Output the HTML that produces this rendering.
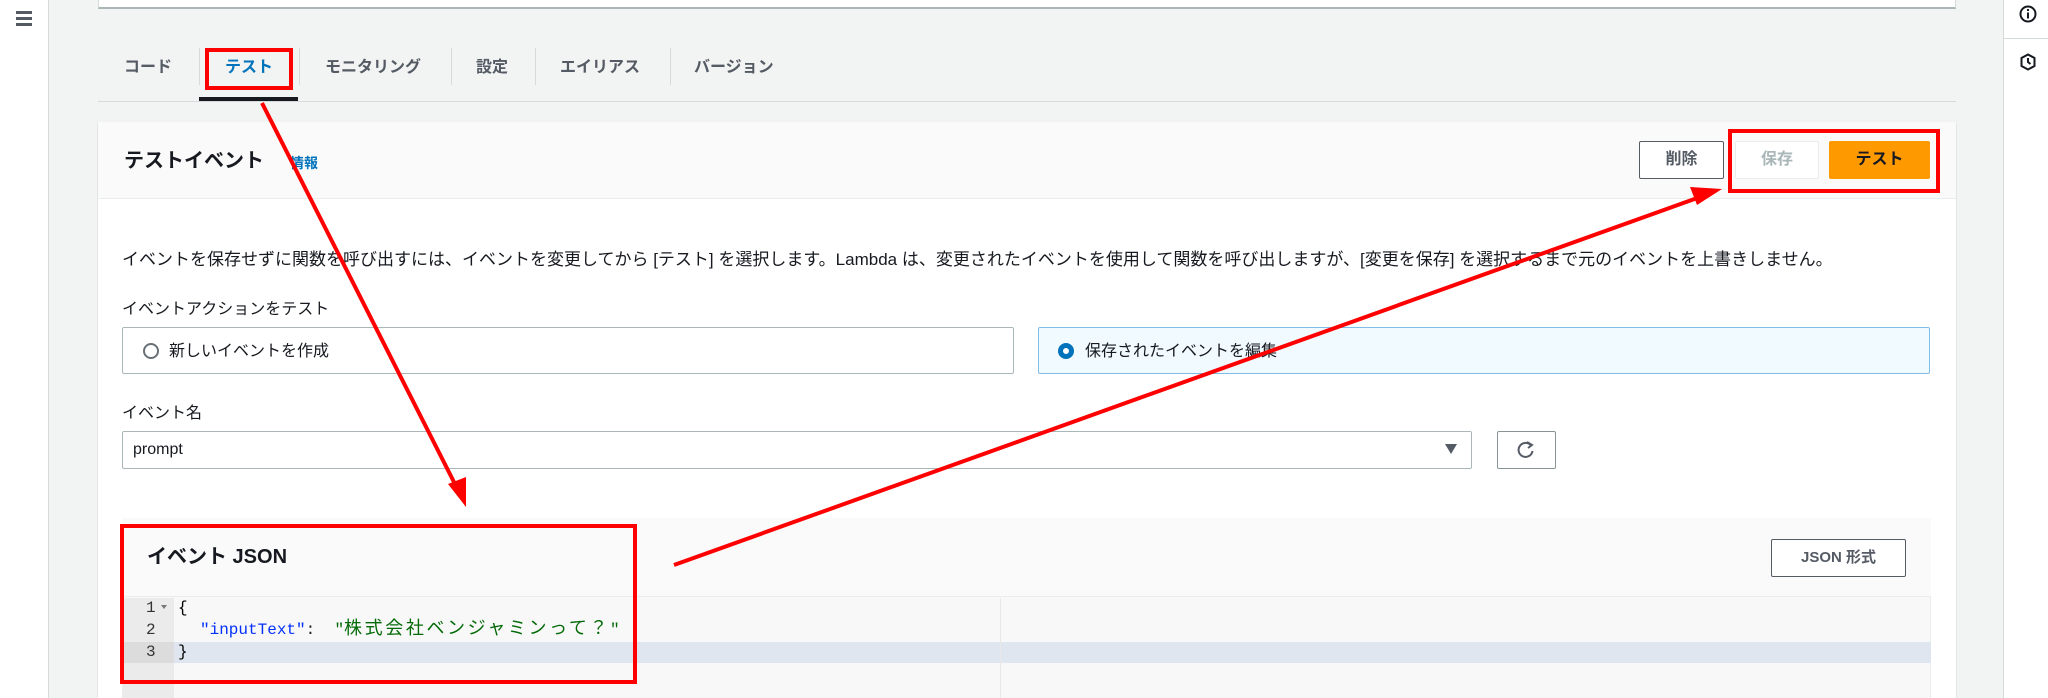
<!DOCTYPE html>
<html style="width:2048px;height:698px;overflow:hidden"><head><meta charset="utf-8"><style>
*{box-sizing:border-box;margin:0;padding:0}
body{width:2048px;height:698px;overflow:hidden;background:#f2f3f3;font-family:"Liberation Sans","Noto Sans CJK JP",sans-serif;color:#16191f;position:relative}
.a{position:absolute}
.t{position:absolute;white-space:nowrap;line-height:1.2}
</style></head><body>
<div class="a" style="left:0;top:0;width:49px;height:698px;background:#fff;border-right:1px solid #d5dbdb"></div>
<div class="a" style="left:16px;top:11px;width:16px;height:3px;background:#545b64"></div>
<div class="a" style="left:16px;top:17px;width:16px;height:3px;background:#545b64"></div>
<div class="a" style="left:16px;top:23px;width:16px;height:3px;background:#545b64"></div>
<div class="a" style="left:2003px;top:0;width:45px;height:698px;background:#fff;border-left:1px solid #d5dbdb"></div>
<div class="a" style="left:2003px;top:38px;width:45px;height:1px;background:#d5dbdb"></div>
<svg class="a" style="left:2018px;top:4px" width="20" height="20" viewBox="0 0 20 20"><circle cx="10" cy="10" r="7.5" fill="none" stroke="#16191f" stroke-width="2"/><rect x="9" y="8.5" width="2" height="6" fill="#16191f"/><rect x="9" y="5" width="2" height="2" fill="#16191f"/></svg>
<svg class="a" style="left:2018px;top:52px" width="20" height="20" viewBox="0 0 20 20"><path d="M10 2.5 L16.5 6 V14 L10 17.5 L3.5 14 V6Z" fill="none" stroke="#16191f" stroke-width="2"/><path d="M10 6 V10 L12.5 12" fill="none" stroke="#16191f" stroke-width="2"/></svg>

<div class="a" style="left:98px;top:-2px;width:1858px;height:11px;background:#fff;border:1px solid #d5dbdb;border-bottom:2px solid #aab7b8"></div>

<div class="a" style="left:98px;top:101px;width:1858px;height:1px;background:#d5dbdb"></div>
<div class="a" style="left:199px;top:48px;width:1px;height:37px;background:#d5dbdb"></div>
<div class="a" style="left:299px;top:48px;width:1px;height:37px;background:#d5dbdb"></div>
<div class="a" style="left:451px;top:48px;width:1px;height:37px;background:#d5dbdb"></div>
<div class="a" style="left:535px;top:48px;width:1px;height:37px;background:#d5dbdb"></div>
<div class="a" style="left:670px;top:48px;width:1px;height:37px;background:#d5dbdb"></div>
<div class="a" style="left:199px;top:97px;width:99px;height:4px;background:#16191f"></div>
<div style="font-size:16px;font-weight:bold;color:#545b64">
<span class="t" style="left:124px;top:58px">コード</span>
<span class="t" style="left:225px;top:58px;color:#0073bb">テスト</span>
<span class="t" style="left:325px;top:58px">モニタリング</span>
<span class="t" style="left:476px;top:58px">設定</span>
<span class="t" style="left:560px;top:58px">エイリアス</span>
<span class="t" style="left:694px;top:58px">バージョン</span>
</div>

<div class="a" style="left:98px;top:122px;width:1858px;height:576px;background:#fff;box-shadow:0 1px 1px rgba(0,28,36,.3)"></div>
<div class="a" style="left:98px;top:122px;width:1858px;height:77px;background:#fafafa;border-bottom:1px solid #eaeded"></div>
<span class="t" style="left:124px;top:149px;font-size:20px;font-weight:bold">テストイベント</span>
<span class="t" style="left:290px;top:155px;font-size:14px;font-weight:bold;color:#0073bb">情報</span>
<div class="a" style="left:1639px;top:141px;width:85px;height:38px;border:1px solid #545b64;border-radius:2px;background:#fff;font-size:16px;font-weight:bold;color:#545b64;text-align:center;line-height:36px">削除</div>
<div class="a" style="left:1735px;top:141px;width:84px;height:38px;border:1px solid #eaeded;border-radius:2px;background:#fff;font-size:16px;font-weight:bold;color:#aab7b8;text-align:center;line-height:36px">保存</div>
<div class="a" style="left:1829px;top:141px;width:101px;height:38px;border-radius:2px;background:#ff9900;font-size:16px;font-weight:bold;color:#16191f;text-align:center;line-height:38px">テスト</div>

<span class="t" style="left:122px;top:250px;font-size:17px">イベントを保存せずに関数を呼び出すには、イベントを変更してから [テスト] を選択します。Lambda は、変更されたイベントを使用して関数を呼び出しますが、[変更を保存] を選択するまで元のイベントを上書きしません。</span>
<span class="t" style="left:122px;top:300px;font-size:16px">イベントアクションをテスト</span>
<div class="a" style="left:122px;top:327px;width:892px;height:47px;border:1px solid #aab7b8;border-radius:2px;background:#fff"></div>
<div class="a" style="left:143px;top:343px;width:16px;height:16px;border:2px solid #687078;border-radius:50%"></div>
<span class="t" style="left:169px;top:342px;font-size:16px">新しいイベントを作成</span>
<div class="a" style="left:1038px;top:327px;width:892px;height:47px;border:1px solid #80bde6;border-radius:2px;background:#f1faff"></div>
<div class="a" style="left:1058px;top:343px;width:16px;height:16px;border:5px solid #0073bb;border-radius:50%;background:#fff"></div>
<span class="t" style="left:1085px;top:342px;font-size:16px">保存されたイベントを編集</span>

<span class="t" style="left:122px;top:404px;font-size:16px">イベント名</span>
<div class="a" style="left:122px;top:431px;width:1350px;height:38px;border:1px solid #aab7b8;border-radius:2px;background:#fff"></div>
<span class="t" style="left:133px;top:440px;font-size:16px">prompt</span>
<svg class="a" style="left:1445px;top:444px" width="12" height="10"><path d="M0 0H12L6 10Z" fill="#545b64"/></svg>
<div class="a" style="left:1497px;top:431px;width:59px;height:38px;border:1px solid #879596;border-radius:2px;background:#fff"></div>
<svg class="a" style="left:1516px;top:440px" width="20" height="20" viewBox="0 0 20 20"><path d="M15 5.5 A7 7 0 1 0 16.5 11" fill="none" stroke="#545b64" stroke-width="2"/><path d="M11 2 L16 5 L12 8" fill="none" stroke="#545b64" stroke-width="2"/></svg>

<div class="a" style="left:122px;top:518px;width:1809px;height:180px;background:#f8f8f8;border:1px solid #eaeded;border-bottom:none"></div>
<div class="a" style="left:122px;top:518px;width:1809px;height:79px;background:#fafafa;border-bottom:1px solid #eaeded"></div>
<span class="t" style="left:147px;top:545px;font-size:20px;font-weight:bold">イベント JSON</span>
<div class="a" style="left:1771px;top:539px;width:135px;height:38px;border:1px solid #545b64;border-radius:2px;background:#fff;font-size:15px;font-weight:bold;color:#545b64;text-align:center;line-height:36px">JSON 形式</div>
<div class="a" style="left:123px;top:598px;width:51px;height:100px;background:#ebebeb"></div>
<div class="a" style="left:174px;top:642px;width:1757px;height:21px;background:#e0e6ef"></div>
<div class="a" style="left:123px;top:642px;width:51px;height:21px;background:#dcdcdc"></div>
<div class="a" style="left:1000px;top:598px;width:1px;height:100px;background:#e8e8e8"></div>
<div style="font-family:'Liberation Mono','Noto Sans CJK JP',monospace;font-size:16px">
<span class="t" style="left:146px;top:598px;color:#333;line-height:21px">1</span>
<svg class="a" style="left:161px;top:605px" width="6" height="5"><path d="M0 0H6L3 4Z" fill="#777"/></svg>
<span class="t" style="left:146px;top:620px;color:#333;line-height:21px">2</span>
<span class="t" style="left:146px;top:642px;color:#333;line-height:21px">3</span>
<span class="t" style="left:178px;top:598px;color:#000;line-height:21px">{</span>
<span class="t" style="left:200px;top:620px;line-height:21px"><span style="color:#0431fa">"inputText"</span>:&nbsp; <span style="color:#036a07">"<span style="font-size:18px;letter-spacing:2.6px">株式会社ベンジャミンって？</span>"</span></span>
<span class="t" style="left:178px;top:642px;color:#000;line-height:21px">}</span>
</div>

<svg class="a" style="left:0;top:0" width="2048" height="698">
<g fill="none" stroke="#ff0000" stroke-width="4">
<rect x="207" y="50" width="84" height="38"/>
<rect x="1730" y="131" width="208" height="60"/>
<rect x="122" y="526" width="513" height="156"/>
<line x1="262" y1="103" x2="458" y2="490"/>
<line x1="674" y1="565" x2="1700" y2="197"/>
</g>
<polygon points="466,507 448,484 466,477" fill="#ff0000"/>
<polygon points="1722,189 1697,205 1690,187" fill="#ff0000"/>
</svg>
</body></html>
